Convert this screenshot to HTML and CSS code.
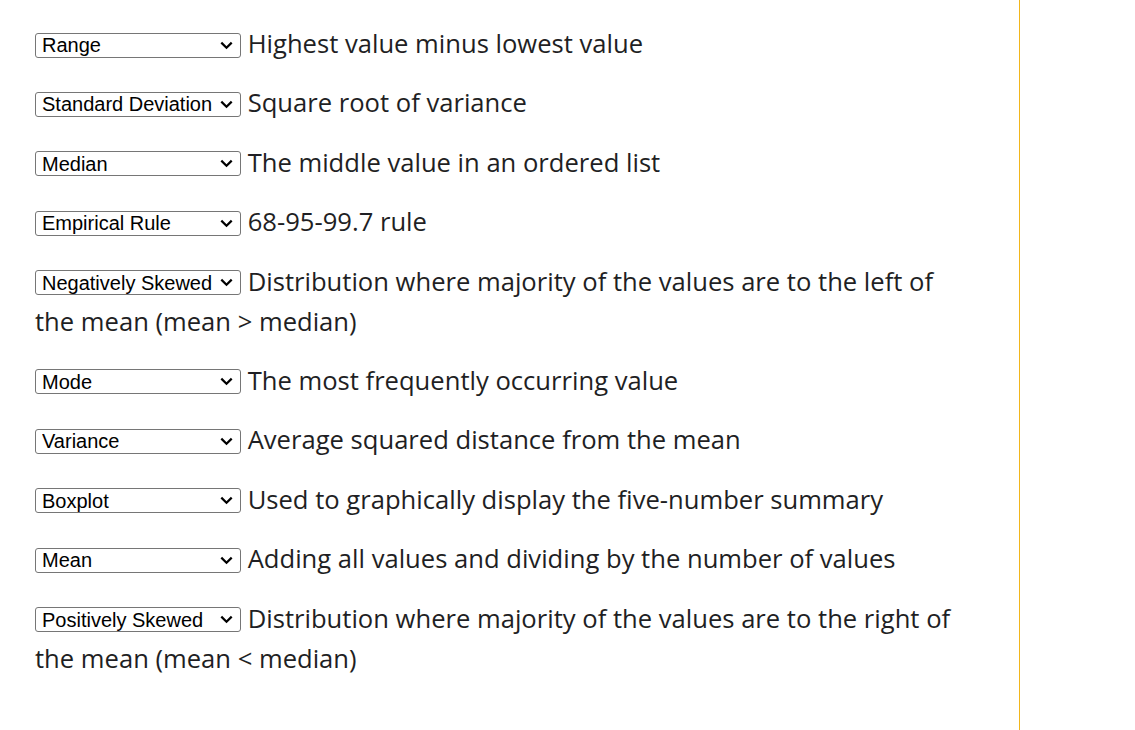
FILE: index.html
```html
<!DOCTYPE html>
<html lang="en">
<head>
    <meta charset="UTF-8">
    <meta name="viewport" content="width=device-width, initial-scale=1.0">
    <title>Statistics Matching</title>
    <link rel="stylesheet" href="styles.css">
</head>
<body>
    <div class="page">
        <div class="quiz" id="quiz"></div>
    </div>

    <script>
        const terms = [
            'Range', 'Standard Deviation', 'Median', 'Empirical Rule', 'Negatively Skewed',
            'Mode', 'Variance', 'Boxplot', 'Mean', 'Positively Skewed'
        ];

        const rows = [
            ['Range', 'Highest value minus lowest value'],
            ['Standard Deviation', 'Square root of variance'],
            ['Median', 'The middle value in an ordered list'],
            ['Empirical Rule', '68-95-99.7 rule'],
            ['Negatively Skewed', 'Distribution where majority of the values are to the left of the mean (mean > median)'],
            ['Mode', 'The most frequently occurring value'],
            ['Variance', 'Average squared distance from the mean'],
            ['Boxplot', 'Used to graphically display the five-number summary'],
            ['Mean', 'Adding all values and dividing by the number of values'],
            ['Positively Skewed', 'Distribution where majority of the values are to the right of the mean (mean < median)']
        ];

        function escapeHtml(s) {
            return s.replace(/&/g, '&amp;').replace(/</g, '&lt;').replace(/>/g, '&gt;');
        }

        document.getElementById('quiz').innerHTML = rows.map(([answer, text]) => `
            <p class="row">
                <select class="answer">
                    ${terms.map(t => `<option${t === answer ? ' selected' : ''}>${t}</option>`).join('')}
                </select>
                ${escapeHtml(text)}
            </p>
        `).join('');
    </script>
</body>
</html>
```

FILE: styles.css
```css
* {
    margin: 0;
    padding: 0;
    box-sizing: border-box;
}

body {
    background-color: #ffffff;
    color: #1f1f24;
    font-family: "Open Sans", "Noto Sans", sans-serif;
}

.page {
    width: 1020px;
    min-height: 100vh;
    border-right: 1px solid #f2b61c;
}

.quiz {
    padding: 24px 55px 0 35px;
}

.row {
    font-size: 25.6px;
    line-height: 40px;
    margin-bottom: 19.4px;
}

/* select with its own chevron so it looks the same everywhere */
.answer {
    -webkit-appearance: none;
    appearance: none;
    font-family: "Liberation Sans", Arial, sans-serif;
    font-size: 20px;
    color: #000000;
    height: 25px;
    padding: 0 27px 0 6px;
    border: 1px solid #767676;
    border-radius: 3px;
    background-color: #ffffff;
    background-image: url("data:image/svg+xml,%3Csvg xmlns='http://www.w3.org/2000/svg' width='13' height='9' viewBox='0 0 13 9'%3E%3Cpath d='M1.3 1.6 6.5 6.8l5.2-5.2' fill='none' stroke='%23000' stroke-width='2.2'/%3E%3C/svg%3E");
    background-size: 13px 9px;
    background-repeat: no-repeat;
    background-position: right 7px center;
    vertical-align: 1px;
}
```
